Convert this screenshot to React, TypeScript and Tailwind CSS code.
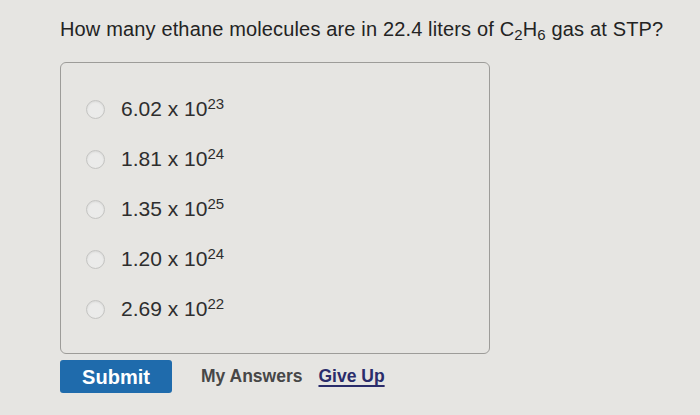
import React from "react";

const options: [string, string][] = [
  ["6.02", "23"],
  ["1.81", "24"],
  ["1.35", "25"],
  ["1.20", "24"],
  ["2.69", "22"],
];

export default function App() {
  return (
    <div
      className="w-[700px] h-[415px] bg-[#e6e5e2] overflow-hidden pl-[60px] pt-[18px]"
      style={{ fontFamily: '"Liberation Sans", Arial, sans-serif' }}
    >
      <div className="text-[20px] leading-[22px] tracking-[0.15px] text-[#232323] whitespace-nowrap">
        How many ethane molecules are in 22.4 liters of C
        <sub className="text-[15px] leading-none">2</sub>H
        <sub className="text-[15px] leading-none">6</sub> gas at STP?
      </div>
      <div className="mt-[22px] w-[430px] h-[292px] border-[1.5px] border-[#9d9c99] rounded-[6px] pt-[21px] flex flex-col">
        {options.map(([m, e], i) => (
          <div key={i} className="h-[50px] flex items-center">
            <div className="ml-[25px] w-[19px] h-[19px] rounded-full border-[1.5px] border-[#c4c4c2] bg-[#ebebea] shadow-[inset_0_1px_2px_rgba(0,0,0,0.08)]" />
            <div className="ml-[16px] text-[21px] leading-[24px] text-[#2e2e2e] whitespace-nowrap">
              {m} x 10
              <sup className="text-[15px] leading-none">{e}</sup>
            </div>
          </div>
        ))}
      </div>
      <div className="mt-[6px] flex items-center">
        <div className="w-[112px] h-[33px] rounded-[3px] bg-[#1f6bac] flex items-center justify-center text-white font-bold text-[20px]">
          Submit
        </div>
        <div className="ml-[29px] text-[17.5px] font-bold text-[#474747]">My Answers</div>
        <div className="ml-[16px] text-[17.5px] font-bold text-[#2a2c6b] underline underline-offset-[3px] decoration-[2px]">
          Give Up
        </div>
      </div>
    </div>
  );
}
